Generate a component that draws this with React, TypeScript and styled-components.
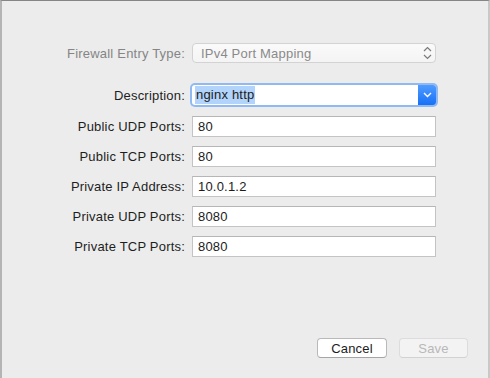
import React from "react";
import styled, { createGlobalStyle } from "styled-components";

const GlobalStyle = createGlobalStyle`
    * {
        box-sizing: border-box;
    }
    body {
        margin: 0;
        background: #ececec;
        font-family: "Liberation Sans", Arial, sans-serif;
        font-size: 13px;
        letter-spacing: 0.2px;
    }
`;

const Window = styled.div`
    width: 490px;
    height: 378px;
    display: flex;
    flex-direction: column;
    background: #ececec;
    border-top: 1px solid #858585;
    border-left: 2px solid #b4b4b4;
    border-right: 2px solid #c8c8c8;
    color: #1c1c1c;
`;

const Form = styled.div`
    display: grid;
    grid-template-columns: 183px 244px;
    column-gap: 7px;
    row-gap: 9px;
    padding-top: 42px;
    align-items: center;
`;

const Label = styled.label<{ $disabled?: boolean }>`
    text-align: right;
    white-space: nowrap;
    color: ${(p) => (p.$disabled ? "#858585" : "#1e1e1e")};
    margin-bottom: ${(p) => (p.$disabled ? "11px" : "0")};
`;

const Popup = styled.div`
    height: 20px;
    display: flex;
    align-items: center;
    justify-content: space-between;
    padding: 0 3px 0 8px;
    background: linear-gradient(#fafafa, #f4f4f4);
    border: 1px solid #d3d3d3;
    border-radius: 4px;
    color: #8a8a8a;
    margin-bottom: 11px;
`;

const FocusRing = styled.div`
    margin: 0 -2px;
    padding: 2px;
    border-radius: 5px;
    background: #8fb9f3;
`;

const Combo = styled.div`
    height: 20px;
    display: flex;
    background: #fff;
    border-radius: 3px;
    overflow: hidden;
`;

const ComboText = styled.div`
    flex: 1;
    display: flex;
    align-items: center;
    padding-left: 3px;
`;

const Selection = styled.span`
    background: #b2d3fa;
    line-height: 18px;
    padding: 0 1px;
`;

const ArrowButton = styled.div`
    width: 18px;
    display: flex;
    align-items: center;
    justify-content: center;
    background: linear-gradient(#4f9bff, #1870f5);
`;

const Field = styled.div`
    height: 21px;
    display: flex;
    align-items: center;
    padding-left: 5px;
    background: #fff;
    border: 1px solid #c4c4c4;
    border-top-color: #b6b6b6;
`;

const Spacer = styled.div`
    flex: 1;
`;

const Footer = styled.div`
    display: flex;
    justify-content: flex-end;
    gap: 12px;
    padding: 0 20px 20px 0;
`;

const Button = styled.button<{ $disabled?: boolean }>`
    width: ${(p) => (p.$disabled ? "69px" : "70px")};
    height: 20px;
    padding: 0;
    font: inherit;
    letter-spacing: inherit;
    border-radius: 4px;
    background: ${(p) => (p.$disabled ? "#f3f3f3" : "#ffffff")};
    border: 1px solid ${(p) => (p.$disabled ? "#dcdcdc" : "#b9b9b9")};
    border-bottom-color: ${(p) => (p.$disabled ? "#d2d2d2" : "#a5a5a5")};
    color: ${(p) => (p.$disabled ? "#b8b8b8" : "#1c1c1c")};
`;

const UpDown = () => (
    <svg width="9" height="14" viewBox="0 0 9 14">
        <path d="M1 5 L4.5 1.5 L8 5" fill="none" stroke="#7a7a7a" strokeWidth="1.2" />
        <path d="M1 9 L4.5 12.5 L8 9" fill="none" stroke="#7a7a7a" strokeWidth="1.2" />
    </svg>
);

const ChevronDown = () => (
    <svg width="9" height="6" viewBox="0 0 9 6">
        <path d="M1 1 L4.5 4.5 L8 1" fill="none" stroke="#fff" strokeWidth="1.4" />
    </svg>
);

const fields = [
    { label: "Public UDP Ports:", value: "80" },
    { label: "Public TCP Ports:", value: "80" },
    { label: "Private IP Address:", value: "10.0.1.2" },
    { label: "Private UDP Ports:", value: "8080" },
    { label: "Private TCP Ports:", value: "8080" },
];

const App: React.FC = () => {
    return (
        <Window>
            <GlobalStyle />
            <Form>
                <Label $disabled>Firewall Entry Type:</Label>
                <Popup>
                    <span>IPv4 Port Mapping</span>
                    <UpDown />
                </Popup>

                <Label>Description:</Label>
                <FocusRing>
                    <Combo>
                        <ComboText>
                            <Selection>nginx http</Selection>
                        </ComboText>
                        <ArrowButton>
                            <ChevronDown />
                        </ArrowButton>
                    </Combo>
                </FocusRing>

                {fields.map((f) => (
                    <React.Fragment key={f.label}>
                        <Label>{f.label}</Label>
                        <Field>{f.value}</Field>
                    </React.Fragment>
                ))}
            </Form>
            <Spacer />
            <Footer>
                <Button>Cancel</Button>
                <Button $disabled>Save</Button>
            </Footer>
        </Window>
    );
};

export default App;
